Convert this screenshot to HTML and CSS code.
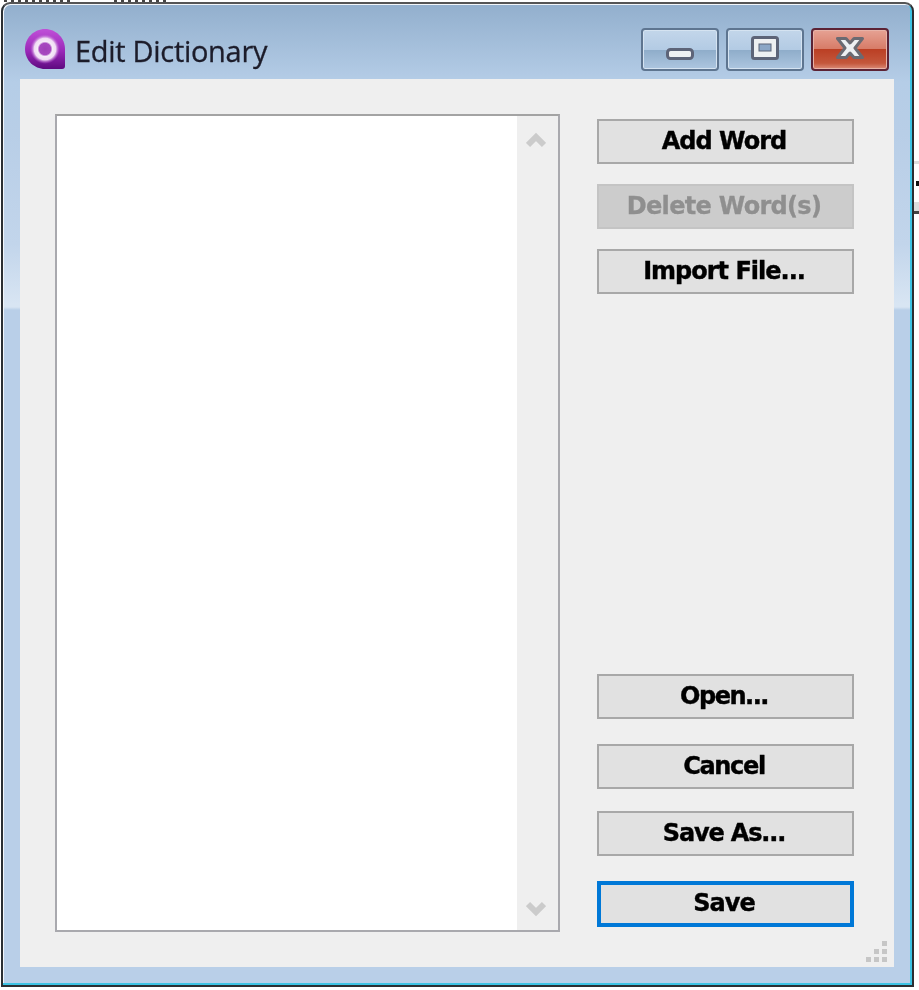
FILE: index.html
```html
<!DOCTYPE html>
<html lang="en">
<head>
    <meta charset="UTF-8">
    <title>Edit Dictionary</title>
    <link rel="stylesheet" href="styles.css">
</head>
<body>

<span class="behind behind-top-a"></span>
<span class="behind behind-top-b"></span>
<span class="behind behind-right-a"></span>
<span class="behind behind-right-b"></span>
<span class="behind behind-right-c"></span>

<div class="window">
    <div class="titlebar">
        <svg class="app-icon" width="40" height="40" viewBox="0 0 40 40">
            <defs>
                <linearGradient id="drop" x1="0" y1="0" x2="0" y2="1">
                    <stop offset="0" stop-color="#c050d8"/>
                    <stop offset="0.55" stop-color="#9a28b8"/>
                    <stop offset="1" stop-color="#5e0a80"/>
                </linearGradient>
                <radialGradient id="ring">
                    <stop offset="0" stop-color="#a040b8"/>
                    <stop offset="0.38" stop-color="#a848c0"/>
                    <stop offset="0.5" stop-color="#f6ecf8"/>
                    <stop offset="0.72" stop-color="#f0dcf4"/>
                    <stop offset="1" stop-color="#b050cc" stop-opacity="0"/>
                </radialGradient>
            </defs>
            <path d="M20 0 C31 0 40 9 40 20 L40 37 Q40 40 37 40 L20 40 C9 40 0 31 0 20 C0 9 9 0 20 0 Z" fill="url(#drop)"/>
            <circle cx="20" cy="20" r="15" fill="url(#ring)"/>
        </svg>
        <span class="title">Edit Dictionary</span>
        <div class="caption-buttons">
            <div class="caption-btn">
                <svg class="icon-min" width="28" height="12" viewBox="0 0 28 12"><rect x="1.500" y="1.500" width="25" height="9" rx="3" fill="#eef0f2" stroke="#5d6478" stroke-width="3"/></svg>
            </div>
            <div class="caption-btn">
                <svg class="icon-max" width="28" height="24" viewBox="0 0 28 24"><rect x="1.500" y="1.500" width="25" height="21" rx="2" fill="#eef0f2" stroke="#5d6478" stroke-width="3"/><rect x="8" y="8" width="12" height="7" fill="#8ba6c6" stroke="#5d6478"/></svg>
            </div>
            <div class="caption-btn caption-close">
                <svg class="icon-close" width="28" height="22" viewBox="0 0 28 22"><path d="M1.500 1.500 H10 L14 6 L18 1.500 H26.500 L19 11 L26.500 20.500 H18 L14 16 L10 20.500 H1.500 L9 11 Z" fill="#eef0f2" stroke="#6a6a72" stroke-width="3" stroke-linejoin="round"/></svg>
            </div>
        </div>
    </div>

    <div class="client">
        <div class="list">
            <div class="list-body"></div>
            <div class="scrollbar">
                <svg width="20" height="18" viewBox="0 0 20 18"><path d="M2 14 L10 6 L18 14" fill="none" stroke="#cbcbcb" stroke-width="6"/></svg>
                <svg width="20" height="18" viewBox="0 0 20 18"><path d="M2 4 L10 12 L18 4" fill="none" stroke="#cbcbcb" stroke-width="6"/></svg>
            </div>
        </div>

        <div class="actions">
            <div class="btn-group">
                <button class="btn">Add Word</button>
                <button class="btn btn-disabled">Delete Word(s)</button>
                <button class="btn">Import File...</button>
            </div>
            <div class="btn-group btn-group-bottom">
                <button class="btn btn-open">Open...</button>
                <button class="btn btn-cancel">Cancel</button>
                <button class="btn btn-saveas">Save As...</button>
                <button class="btn btn-default">Save</button>
            </div>
        </div>

        <svg class="grip" width="22" height="22" viewBox="0 0 22 22">
            <g fill="#c6c6c6">
                <rect x="16" y="0" width="5" height="5"/>
                <rect x="8" y="8" width="5" height="5"/>
                <rect x="16" y="8" width="5" height="5"/>
                <rect x="0" y="16" width="5" height="5"/>
                <rect x="8" y="16" width="5" height="5"/>
                <rect x="16" y="16" width="5" height="5"/>
            </g>
        </svg>
    </div>
</div>

</body>
</html>
```

FILE: styles.css
```css
* {
    margin: 0;
    padding: 0;
    box-sizing: border-box;
}

body {
    width: 919px;
    height: 990px;
    background: #fff;
    position: relative;
    overflow: hidden;
    padding: 2px 5px 3px 1px;
}

/* bits of the app behind the dialog */
.behind {
    position: absolute;
}

.behind-top-a,
.behind-top-b {
    top: 0;
    height: 2px;
    background: repeating-linear-gradient(to right, #444 0, #444 3px, transparent 3px, transparent 7px);
}

.behind-top-a {
    left: 4px;
    width: 68px;
}

.behind-top-b {
    left: 114px;
    width: 54px;
}

.behind-right-a {
    right: 0;
    top: 161px;
    width: 5px;
    height: 3px;
    background: #ddd;
}

.behind-right-b {
    right: 0;
    top: 181px;
    width: 3px;
    height: 5px;
    background: #111;
}

.behind-right-c {
    right: 0;
    top: 202px;
    width: 5px;
    height: 12px;
    background: #ddd;
    border-bottom: 3px solid #444;
}

.window {
    position: relative;
    height: 100%;
    display: flex;
    flex-direction: column;
    padding: 0 18px 18px 17px;
    border: 2px solid #2b2f33;
    border-top-color: #555;
    border-radius: 9px 9px 0 0;
    background: linear-gradient(to bottom, #92afcd 0, #b5cde7 78px, #b8cee7 130px, #c2d5eb 240px, #d8e5f3 300px, #d8e5f3 303px, #b9cfe8 306px, #b9cfe8 100%);
    box-shadow: inset -2px -2px 0 #3cc3e4, inset 1px 1px 0 #f2f6fa;
    /* the reference is a scaled up screenshot, everything is a bit soft */
    filter: blur(0.7px);
}

.titlebar {
    height: 75px;
    flex: none;
    display: flex;
    align-items: flex-start;
}

.app-icon {
    margin: 25px 0 0 5px;
    flex: none;
}

.title {
    margin: 25px 0 0 10px;
    font: 29px/44px "Open Sans", sans-serif;
    color: #1c1c2a;
    letter-spacing: -0.3px;
    -webkit-text-stroke: 0.3px #1c1c2a;
}

.caption-buttons {
    margin: 24px 5px 0 auto;
    display: flex;
    gap: 7px;
}

.caption-btn {
    width: 78px;
    height: 43px;
    display: flex;
    align-items: center;
    justify-content: center;
    border: 2px solid #5e7590;
    border-radius: 4px;
    background: linear-gradient(to bottom, #c3d6ea 0, #b3cbe4 50%, #8fadca 52%, #adc6e0 100%);
    box-shadow: inset 0 0 0 1px #d5e3f1;
}

.icon-min {
    margin-top: 8px;
}

.icon-max {
    margin-top: -3px;
}

.icon-close {
    margin-top: -3px;
}

.caption-close {
    border-color: #5c2335;
    background: linear-gradient(to bottom, #e6a294 0, #d77c68 48%, #bb3f24 50%, #c4573c 85%, #dc8c78 100%);
    box-shadow: inset 0 0 0 1px #e8b3a8;
}

.client {
    position: relative;
    flex: 1;
    display: flex;
    background: #efefef;
    padding: 35px 40px 35px 35px;
}

.list {
    width: 505px;
    display: flex;
    background: #fff;
    border: 2px solid #a9a9ae;
    border-top-color: #a3a3a3;
}

.list-body {
    flex: 1;
}

.scrollbar {
    width: 41px;
    display: flex;
    flex-direction: column;
    justify-content: space-between;
    align-items: center;
    padding: 15px 4px 12px 0;
    background: #efefef;
}

.actions {
    margin-left: 37px;
    width: 257px;
    display: flex;
    flex-direction: column;
    padding: 5px 0 5px;
}

.btn-group {
    display: flex;
    flex-direction: column;
    gap: 20px;
}

.btn-group-bottom {
    margin-top: auto;
    gap: 0;
}

.btn {
    display: block;
    width: 100%;
    height: 45px;
    padding: 0 3px 2px 0;
    background: #e1e1e1;
    border: 2px solid #a8a8a8;
    font: bold 24px "DejaVu Sans", sans-serif;
    letter-spacing: -1px;
    color: #000;
    -webkit-text-stroke: 0.4px #000;
}

.btn-disabled {
    background: #cccccc;
    border-color: #c4c4c4;
    color: #8f8f8f;
    letter-spacing: -0.7px;
    -webkit-text-stroke: 0.3px #8f8f8f;
}

.btn-open {
    letter-spacing: -1.5px;
}

.btn-cancel {
    margin-top: 25px;
    letter-spacing: -1.35px;
}

.btn-saveas {
    margin-top: 22px;
    letter-spacing: -1.15px;
}

.btn-default {
    margin-top: 25px;
    height: 46px;
    border: 4px solid #0078d7;
}

.grip {
    position: absolute;
    right: 6px;
    bottom: 4px;
}
```
